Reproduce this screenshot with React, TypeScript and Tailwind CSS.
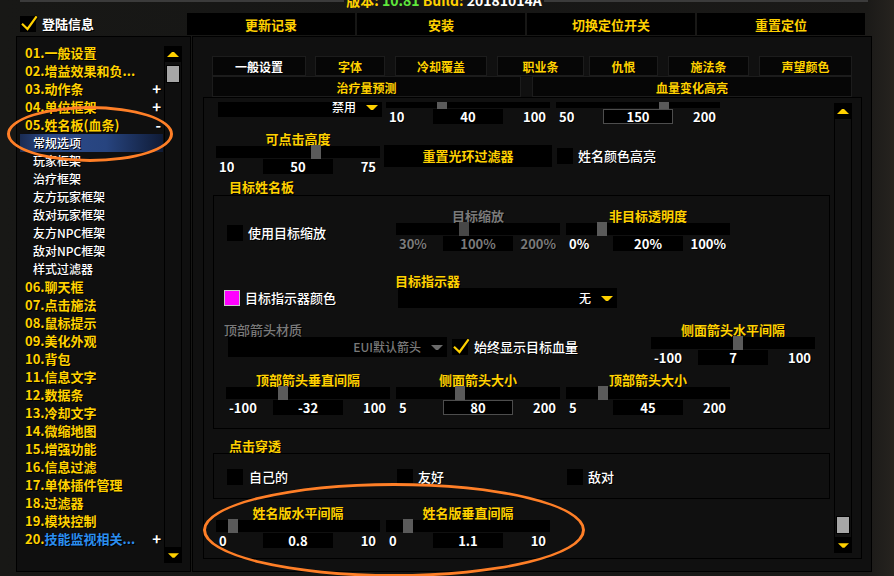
import React from "react";

const SH = "[text-shadow:1px_1px_0_#000]";

function Arrow({ dir = "down", color = "#ffd100", w = 12, h = 5 }: { dir?: "up" | "down"; color?: string; w?: number; h?: number }) {
  return dir === "down" ? (
    <svg width={w} height={h} viewBox="0 0 12 5" className="shrink-0">
      <polygon points="0,0 12,0 7,5 5,5" fill={color} />
    </svg>
  ) : (
    <svg width={w} height={h} viewBox="0 0 12 5" className="shrink-0">
      <polygon points="5,0 7,0 12,5 0,5" fill={color} />
    </svg>
  );
}

function Check() {
  return (
    <svg width="19" height="17" viewBox="0 0 19 17" className="absolute left-0 top-[-1px]">
      <path d="M1.5 8.5 L7.5 14.5 L17 1" fill="none" stroke="#000" strokeWidth="4" />
      <path d="M2 8.8 L7.5 14 L16.6 1.4" fill="none" stroke="#ffd100" strokeWidth="2.2" />
    </svg>
  );
}

function CheckBox({ checked = false, label, className = "", gap = "ml-[5px]" }: { checked?: boolean; label?: string; className?: string; gap?: string }) {
  return (
    <div className={`flex items-center ${className}`}>
      <div className="relative h-[16px] w-[16px] shrink-0 bg-black">{checked && <Check />}</div>
      {label && <span className={`${gap} whitespace-nowrap text-[13px] font-medium leading-[16px] text-white ${SH}`}>{label}</span>}
    </div>
  );
}

type SP = {
  label?: string;
  min: number;
  max: number;
  value: number;
  suffix?: string;
  disabled?: boolean;
  boxed?: boolean;
  className?: string;
};

function Slider({ label = "", min, max, value, suffix = "", disabled = false, boxed = false, className = "" }: SP) {
  const pos = Math.round(((value - min) / (max - min)) * 154);
  const num = disabled ? "text-[#7a7a7a]" : "text-white";
  return (
    <div className={`w-[164px] shrink-0 ${className}`}>
      <div className={`h-[14px] whitespace-nowrap text-center text-[13px] font-bold leading-[14px] ${disabled ? "text-[#7a7a7a]" : "text-[#ffd100]"} ${SH}`}>
        {label}
      </div>
      <div className="relative h-[12px] bg-black">
        <div className={`absolute top-[-1px] h-[14px] w-[10px] ${disabled ? "bg-[#474747]" : "bg-[#5a5a5a]"}`} style={{ left: pos }} />
      </div>
      <div className={`mt-[1px] flex h-[15px] items-center text-[13px] font-semibold leading-[15px] ${num} ${SH}`}>
        <span className="w-[47px] pl-[3px]">{`${min}${suffix}`}</span>
        <div className={`flex h-[15px] w-[70px] items-center justify-center bg-black ${boxed ? "border border-[#4d4d4d]" : ""}`}>{`${value}${suffix}`}</div>
        <span className="flex-1 pr-[4px] text-right">{`${max}${suffix}`}</span>
      </div>
    </div>
  );
}

function DropBox({ text, disabled = false, w }: { text: string; disabled?: boolean; w: string }) {
  return (
    <div className={`flex h-[20px] ${w} items-center justify-end bg-black pr-[4px]`}>
      <span className={`mr-[10px] text-[12px] font-medium ${disabled ? "text-[#7a7a7a]" : "text-white"} ${SH}`}>{text}</span>
      <Arrow color={disabled ? "#6a6a6a" : "#ffd100"} />
    </div>
  );
}

function ScrollBar({ bottom = false }: { bottom?: boolean }) {
  return (
    <div className="flex h-full w-[18px] flex-col">
      <div className="flex h-[16px] items-center justify-center bg-black">
        <Arrow dir="up" w={12} h={5} />
      </div>
      <div className={`flex flex-1 flex-col items-center border-x border-black ${bottom ? "justify-end pb-[3px]" : "pt-[3px]"}`}>
        <div className="h-[18px] w-[14px] border border-black bg-[#a6a6a6]" />
      </div>
      <div className="flex h-[16px] items-center justify-center bg-black">
        <Arrow dir="down" w={11} h={5} />
      </div>
    </div>
  );
}

type Item = { t: string; sub?: boolean; sel?: boolean; sign?: string; blue?: string };

const LIST: Item[] = [
  { t: "01.一般设置" },
  { t: "02.增益效果和负..." },
  { t: "03.动作条", sign: "+" },
  { t: "04.单位框架", sign: "+" },
  { t: "05.姓名板(血条)", sign: "-" },
  { t: "常规选项", sub: true, sel: true },
  { t: "玩家框架", sub: true },
  { t: "治疗框架", sub: true },
  { t: "友方玩家框架", sub: true },
  { t: "敌对玩家框架", sub: true },
  { t: "友方NPC框架", sub: true },
  { t: "敌对NPC框架", sub: true },
  { t: "样式过滤器", sub: true },
  { t: "06.聊天框" },
  { t: "07.点击施法" },
  { t: "08.鼠标提示" },
  { t: "09.美化外观" },
  { t: "10.背包" },
  { t: "11.信息文字" },
  { t: "12.数据条" },
  { t: "13.冷却文字" },
  { t: "14.微缩地图" },
  { t: "15.增强功能" },
  { t: "16.信息过滤" },
  { t: "17.单体插件管理" },
  { t: "18.过滤器" },
  { t: "19.模块控制" },
  { t: "20.", blue: "技能监视相关...", sign: "+" },
];

const TABS1 = [
  { t: "一般设置", w: "w-[94px]", m: "ml-0", active: true },
  { t: "字体", w: "w-[70px]", m: "ml-[9px]" },
  { t: "冷却覆盖", w: "w-[92px]", m: "ml-[10px]" },
  { t: "职业条", w: "w-[87px]", m: "ml-[10px]" },
  { t: "仇恨", w: "w-[69px]", m: "ml-[5px]" },
  { t: "施法条", w: "w-[81px]", m: "ml-[10px]" },
  { t: "声望颜色", w: "w-[93px]", m: "ml-[10px]" },
];

export default function App() {
  return (
    <div className="relative h-[576px] w-[894px] overflow-hidden bg-[linear-gradient(90deg,#181816_0%,#161615_50%,#1b1a18_97%,#26231f_100%)] font-['Noto_Sans_CJK_SC','Noto_Sans',sans-serif]">
      {/* title band */}
      <div className="flex h-[13px] items-start pl-[20px]">
        <div className="h-[2px] w-[324px] bg-[#3b3b3b]" />
        <div className="-mt-[7px] w-[200px] whitespace-nowrap text-center text-[14px] font-bold leading-[14px]">
          <span className="text-[#ffd100]">版本: </span>
          <span className="text-[#5fe83c]">10.81</span>
          <span className="text-[#ffd100]"> Build: </span>
          <span className="text-white">20181014A</span>
        </div>
        <div className="h-[2px] w-[324px] bg-[#3b3b3b]" />
      </div>

      {/* header row */}
      <div className="flex h-[22px]">
        <div className="flex w-[187px] items-center pl-[20px]">
          <div className="relative h-[16px] w-[16px] bg-black">
            <Check />
          </div>
          <span className={`ml-[6px] text-[13px] font-bold text-white ${SH}`}>登陆信息</span>
        </div>
        <div className="flex gap-[2px]">
          {["更新记录", "安装", "切换定位开关", "重置定位"].map((b) => (
            <div key={b} className={`flex h-[22px] w-[168px] items-center justify-center bg-black pt-[1px] text-[13px] font-bold text-[#ffd100] ${SH}`}>
              {b}
            </div>
          ))}
        </div>
      </div>

      {/* panels */}
      <div className="mt-[1px] flex h-[536px]">
        {/* left tree */}
        <div className="ml-[16px] flex h-full w-[175px] border border-black bg-[#0f0f0f] pr-[8px]">
          <div className="w-[147px] pt-[7px]">
            {LIST.map((it, i) => (
              <div
                key={i}
                className={`ml-[3px] mr-[1px] flex h-[18px] items-center ${it.sel ? "bg-[linear-gradient(90deg,#1a2b52_0%,#2c4a88_20%,#27447f_60%,#0f1b36_100%)]" : ""}`}
              >
                <span
                  className={`whitespace-nowrap leading-[18px] ${it.sub ? "pl-[13px] text-[12px] font-medium text-white" : "pl-[5px] text-[13px] font-bold text-[#ffd100]"} ${SH}`}
                >
                  {it.t}
                  {it.blue && <span className="text-[#2b8ef0]">{it.blue}</span>}
                </span>
                {it.sign && <span className={`ml-auto pr-[2px] text-[15px] font-bold leading-[18px] text-white ${SH}`}>{it.sign}</span>}
              </div>
            ))}
          </div>
          <div className="pb-[8px] pt-[9px]">
            <ScrollBar />
          </div>
        </div>

        {/* main panel */}
        <div className="ml-[1px] h-full w-[680px] border border-black bg-[#101010]">
          <div className="pl-[19px] pt-[19px]">
            <div className="flex h-[20px]">
              {TABS1.map((t) => (
                <div
                  key={t.t}
                  className={`${t.w} ${t.m} flex h-[20px] items-center justify-center border border-[#1c1c1c] bg-[#060606] pt-[2px] text-[12px] font-bold ${t.active ? "text-white" : "text-[#ffd100]"} ${SH}`}
                >
                  {t.t}
                </div>
              ))}
            </div>
            <div className="flex h-[21px]">
              <div className={`flex h-[21px] w-[309px] items-center justify-center border border-[#1c1c1c] bg-[#060606] pt-[2px] text-[12px] font-bold text-[#ffd100] ${SH}`}>
                治疗量预测
              </div>
              <div className={`ml-[11px] flex h-[21px] w-[320px] items-center justify-center border border-[#1c1c1c] bg-[#060606] pt-[2px] text-[12px] font-bold text-[#ffd100] ${SH}`}>
                血量变化高亮
              </div>
            </div>
          </div>

          {/* content frame */}
          <div className="ml-[10px] flex h-[462px] w-[659px] border border-black">
            <div className="relative mb-[1px] mt-[4px] w-[630px] overflow-hidden">
              {/* row A (scrolled) */}
              <div className="-mt-[20px] flex items-start">
                <div className="ml-[14px] w-[164px] shrink-0">
                  <div className="h-[15px]" />
                  <DropBox text="禁用" w="w-[164px]" />
                </div>
                <Slider className="ml-[4px]" min={10} max={100} value={40} />
                <Slider className="ml-[6px]" min={50} max={200} value={150} boxed />
              </div>

              {/* row B */}
              <div className="mt-[8px] flex items-start">
                <Slider className="ml-[12px]" label="可点击高度" min={10} max={75} value={50} />
                <div className={`ml-[4px] mt-[13px] flex h-[22px] w-[168px] shrink-0 items-center justify-center bg-black text-[13px] font-bold text-[#ffd100] ${SH}`}>
                  重置光环过滤器
                </div>
                <CheckBox className="ml-[5px] mt-[16px]" label="姓名颜色高亮" />
              </div>

              {/* 目标姓名板 */}
              <div className={`mt-[5px] h-[15px] pl-[25px] text-[13px] font-bold leading-[15px] text-[#ffd100] ${SH}`}>目标姓名板</div>
              <div className="ml-[9px] mt-[1px] h-[234px] w-[617px] border border-black">
                <div className="mt-[13px] flex items-start">
                  <div className="ml-[13px] w-[169px] shrink-0">
                    <CheckBox className="mt-[16px]" label="使用目标缩放" />
                  </div>
                  <Slider label="目标缩放" min={30} max={200} value={100} suffix="%" disabled />
                  <Slider className="ml-[6px]" label="非目标透明度" min={0} max={100} value={20} suffix="%" />
                </div>

                <div className="mt-[23px] flex items-start">
                  <div className="ml-[10px] flex w-[171px] shrink-0 items-center pt-[16px]">
                    <div className="h-[16px] w-[16px] border border-[#c8c8c8] bg-[#ff00ff]" />
                    <span className={`ml-[5px] whitespace-nowrap text-[13px] font-medium leading-[16px] text-white ${SH}`}>目标指示器颜色</span>
                  </div>
                  <div>
                    <div className={`h-[14px] text-[13px] font-bold leading-[14px] text-[#ffd100] ${SH}`}>目标指示器</div>
                    <div className="ml-[3px]">
                      <DropBox text="无" w="w-[219px]" />
                    </div>
                  </div>
                </div>

                <div className="mt-[15px] flex items-start">
                  <div className="ml-[10px] w-[223px] shrink-0">
                    <div className={`h-[14px] text-[13px] font-medium leading-[14px] text-[#7a7a7a] ${SH}`}>顶部箭头材质</div>
                    <div className="ml-[4px]">
                      <DropBox text="EUI默认箭头" w="w-[219px]" disabled />
                    </div>
                  </div>
                  <div className="ml-[5px] w-[199px] shrink-0">
                    <CheckBox className="mt-[16px]" checked label="始终显示目标血量" gap="ml-[6px]" />
                  </div>
                  <Slider label="侧面箭头水平间隔" min={-100} max={100} value={7} />
                </div>

                <div className="mt-[8px] flex items-start">
                  <Slider className="ml-[12px]" label="顶部箭头垂直间隔" min={-100} max={100} value={-32} />
                  <Slider className="ml-[6px]" label="侧面箭头大小" min={5} max={200} value={80} boxed />
                  <Slider className="ml-[6px]" label="顶部箭头大小" min={5} max={200} value={45} />
                </div>
              </div>

              {/* 点击穿透 */}
              <div className={`mt-[9px] h-[15px] pl-[25px] text-[13px] font-bold leading-[15px] text-[#ffd100] ${SH}`}>点击穿透</div>
              <div className="ml-[9px] flex h-[46px] w-[617px] items-start border border-black pl-[13px] pt-[15px]">
                <div className="w-[170px] shrink-0">
                  <CheckBox label="自己的" gap="ml-[6px]" />
                </div>
                <div className="w-[170px] shrink-0">
                  <CheckBox label="友好" />
                </div>
                <div className="w-[170px] shrink-0">
                  <CheckBox label="敌对" />
                </div>
              </div>

              {/* bottom sliders */}
              <div className="mt-[7px] flex items-start">
                <Slider className="ml-[12px]" label="姓名版水平间隔" min={0} max={10} value={0.8} />
                <Slider className="ml-[6px]" label="姓名版垂直间隔" min={0} max={10} value={1.1} />
              </div>
            </div>
            <div className="mb-[5px] mt-[5px] w-[18px]">
              <ScrollBar bottom />
            </div>
          </div>
        </div>
      </div>

      {/* annotation ellipses */}
      <div className="pointer-events-none absolute left-[7px] top-[106px] h-[56px] w-[166px] rounded-[50%] border-[3px] border-[#ff7f27]" />
      <div className="pointer-events-none absolute left-[203px] top-[483px] h-[94px] w-[382px] rounded-[50%] border-[3px] border-[#ff7f27]" />
    </div>
  );
}
